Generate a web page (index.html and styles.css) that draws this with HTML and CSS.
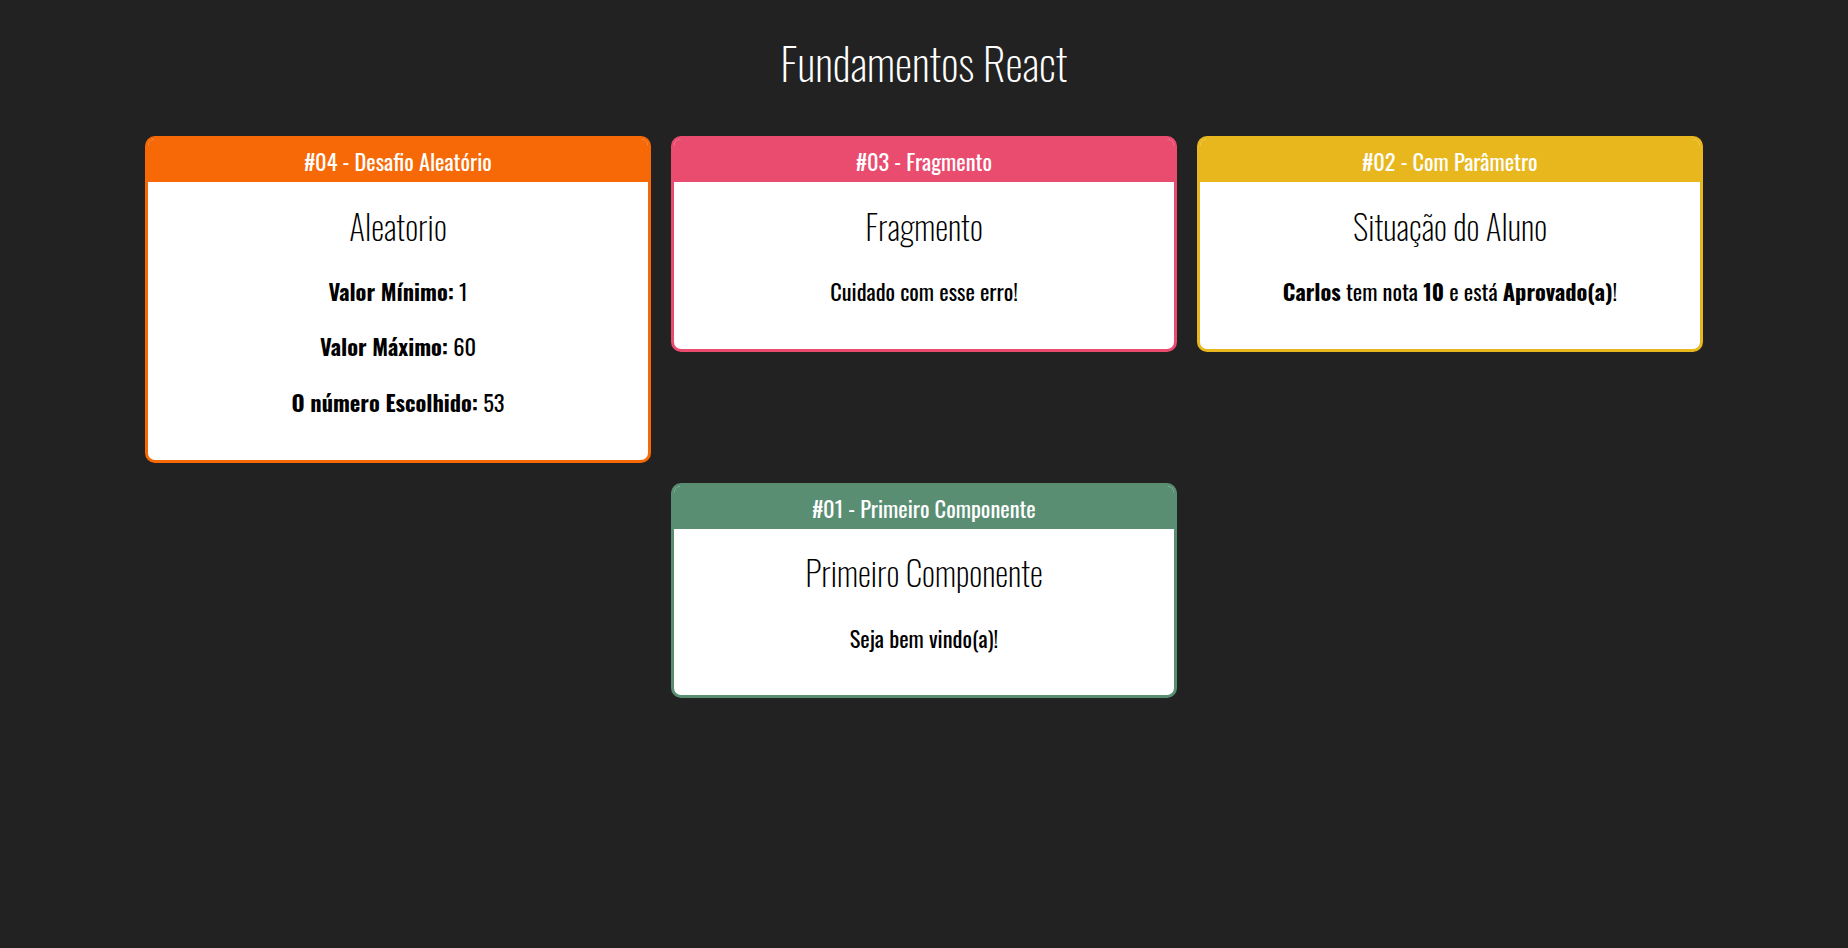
FILE: index.html
```html
<!DOCTYPE html>
<html lang="pt-BR">
<head>
    <meta charset="UTF-8">
    <meta name="viewport" content="width=device-width, initial-scale=1.0">
    <title>Fundamentos React</title>
    <link rel="stylesheet" href="styles.css">
</head>
<body>
    <div class="app">
        <h1>Fundamentos React</h1>
        <div class="cards">
            <div class="card card-orange">
                <div class="card-title">#04 - Desafio Aleatório</div>
                <div class="card-content">
                    <h2>Aleatorio</h2>
                    <p><strong>Valor Mínimo:</strong> 1</p>
                    <p><strong>Valor Máximo:</strong> 60</p>
                    <p><strong>O número Escolhido:</strong> 53</p>
                </div>
            </div>
            <div class="card card-pink">
                <div class="card-title">#03 - Fragmento</div>
                <div class="card-content">
                    <h2>Fragmento</h2>
                    <p>Cuidado com esse erro!</p>
                </div>
            </div>
            <div class="card card-yellow">
                <div class="card-title">#02 - Com Parâmetro</div>
                <div class="card-content">
                    <h2>Situação do Aluno</h2>
                    <p><strong>Carlos</strong> tem nota <strong>10</strong> e está <strong>Aprovado(a)</strong>!</p>
                </div>
            </div>
            <div class="card card-green">
                <div class="card-title">#01 - Primeiro Componente</div>
                <div class="card-content">
                    <h2>Primeiro Componente</h2>
                    <p>Seja bem vindo(a)!</p>
                </div>
            </div>
        </div>
    </div>
</body>
</html>
```
FILE: styles.css
```css
body {
    margin: 0;
    background-color: #222;
    font-family: 'Oswald', 'Open Sans', sans-serif;
    color: #000;
}
.app {
    display: flex;
    flex-direction: column;
    align-items: center;
    padding-top: 29px;
}
h1 {
    margin: 0 0 31px;
    font-size: 44.8px;
    font-weight: 200;
    color: #fff;
}
.cards {
    display: flex;
    flex-wrap: wrap;
    justify-content: center;
    align-items: flex-start;
    width: 100%;
}
.card {
    box-sizing: border-box;
    width: 506px;
    margin: 10px;
    border: 3px solid #000;
    border-radius: 10px;
    overflow: hidden;
    background-color: #fff;
}
.card-title {
    padding: 5px 0;
    font-size: 22.4px;
    color: #fff;
    text-align: center;
}
.card-content {
    padding: 18.5px 10px 19.4px;
    text-align: center;
}
.card-content h2 {
    margin: 0 0 23.5px;
    font-size: 33.6px;
    font-weight: 200;
}
.card-content p {
    margin: 22.4px 0;
    font-size: 22.4px;
    font-weight: 400;
}
.card-content p strong {
    font-weight: 700;
}
.card-orange { border-color: #f76806; }
.card-orange .card-title { background-color: #f76806; }
.card-pink { border-color: #e94c6f; }
.card-pink .card-title { background-color: #e94c6f; }
.card-yellow { border-color: #e8b71e; }
.card-yellow .card-title { background-color: #e8b71e; }
.card-green { border-color: #598e73; }
.card-green .card-title { background-color: #598e73; }
```
